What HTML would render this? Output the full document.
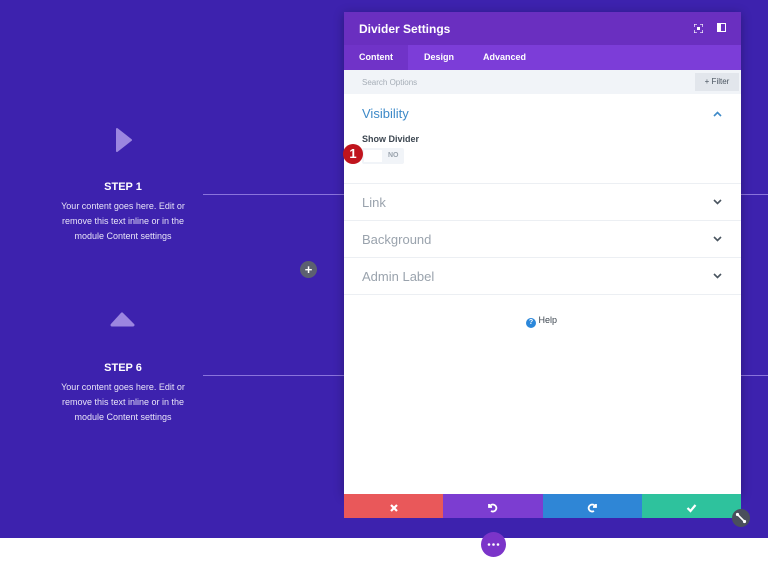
<!DOCTYPE html><html><head><style>
*{margin:0;padding:0;box-sizing:border-box}
body{width:768px;height:561px;overflow:hidden;background:#fff;font-family:"Liberation Sans",sans-serif;position:relative}
.bg{position:absolute;left:0;top:0;width:768px;height:538px;background:#3d22ae}
.a{position:absolute}
.step{color:#fff;font-weight:bold;font-size:11px;text-align:center;width:160px}
.txt{color:#e8e4f8;font-size:9px;line-height:15px;text-align:center;width:136px}
.line{height:1px;background:#8a74dc}
.row{position:absolute;left:344px;width:397px;height:37px;border-top:1px solid #eceff3;color:#9aa3ad;font-size:13px;padding:11px 18px}
.chev{position:absolute;right:19px;top:15px}
.btn{position:absolute;top:494px;height:24px;width:99.25px;text-align:center;padding-top:6px}
</style></head><body>
<div class="bg"></div>
<svg class="a" style="left:116px;top:127px" width="17" height="26"><path d="M1 2 L15 13 L1 24Z" fill="#9c86e0" stroke="#9c86e0" stroke-linejoin="round" stroke-width="2"/></svg>
<div class="a step" style="left:43px;top:181px">STEP 1</div>
<div class="a txt" style="left:55px;top:199px">Your content goes here. Edit or remove this text inline or in the module Content settings</div>
<div class="a line" style="left:203px;top:194px;width:565px"></div>
<div class="a" style="left:300px;top:261px;width:17px;height:17px;border-radius:50%;background:#5c6070;color:#fff;font-size:13px;line-height:17px;text-align:center;font-weight:bold">+</div>
<svg class="a" style="left:109px;top:310px" width="27" height="17"><path d="M3 15 L13 4 L24 15Z" fill="#9c86e0" stroke="#9c86e0" stroke-linejoin="round" stroke-width="3"/></svg>
<div class="a step" style="left:43px;top:362px">STEP 6</div>
<div class="a txt" style="left:55px;top:380px">Your content goes here. Edit or remove this text inline or in the module Content settings</div>
<div class="a line" style="left:203px;top:375px;width:565px"></div>

<div class="a" style="left:344px;top:12px;width:397px;height:482px;background:#fff;box-shadow:0 2px 10px rgba(0,0,0,.3)"></div>
<div class="a" style="left:344px;top:12px;width:397px;height:33px;background:#6a2fc0;color:#fff;font-weight:bold;font-size:12px;padding:10px 15px">Divider Settings
<svg style="position:absolute;right:38px;top:12px" width="9" height="9"><path d="M0 3V0H3M6 0H9V3M9 6V9H6M3 9H0V6" stroke="#fff" fill="none" stroke-width="1.3"/><rect x="3" y="3" width="3" height="3" fill="#fff"/></svg>
<span style="position:absolute;right:15px;top:11px;width:9px;height:9px;border:1.5px solid #fff;border-left-width:4px"></span></div>
<div class="a" style="left:344px;top:45px;width:397px;height:25px;background:#7c3dd8;color:#fff;font-size:9px;font-weight:bold">
<span class="a" style="left:0;width:64px;height:25px;background:#7033c8;line-height:25px;text-align:center">Content</span>
<span class="a" style="left:80px;line-height:25px">Design</span>
<span class="a" style="left:139px;line-height:25px">Advanced</span></div>
<div class="a" style="left:344px;top:70px;width:397px;height:24px;background:#f1f4f8;color:#a5adb6;font-size:8px;padding:8px 18px">Search Options
<span style="position:absolute;right:2px;top:3px;width:44px;height:18px;background:#e2e6ec;color:#4a5560;font-size:8px;line-height:18px;text-align:center">+ Filter</span></div>
<div class="a" style="left:362px;top:106px;color:#3e8ac8;font-size:13px">Visibility</div>
<svg class="a" style="left:713px;top:111px" width="9" height="6"><path d="M1 5L4.5 1.5L8 5" stroke="#3e8ac8" stroke-width="1.6" fill="none"/></svg>
<div class="a" style="left:362px;top:134px;color:#3c4650;font-size:9px;font-weight:bold">Show Divider</div>
<div class="a" style="left:362px;top:148px;width:42px;height:16px;background:#f1f4f8;border-radius:2px"><span class="a" style="left:2px;top:2px;width:18px;height:12px;background:#fff"></span><span class="a" style="left:26px;top:4px;font-size:7px;color:#9aa3ad;font-weight:bold">NO</span></div>
<div class="a" style="left:343px;top:144px;width:20px;height:20px;border-radius:50%;background:#c0141d;color:#fff;font-weight:bold;font-size:13px;line-height:20px;text-align:center">1</div>
<div class="row" style="top:183px">Link<svg class="chev" width="9" height="6"><path d="M1 1L4.5 4.5L8 1" stroke="#4a5560" stroke-width="1.6" fill="none"/></svg></div>
<div class="row" style="top:220px">Background<svg class="chev" width="9" height="6"><path d="M1 1L4.5 4.5L8 1" stroke="#4a5560" stroke-width="1.6" fill="none"/></svg></div>
<div class="row" style="top:257px">Admin Label<svg class="chev" width="9" height="6"><path d="M1 1L4.5 4.5L8 1" stroke="#4a5560" stroke-width="1.6" fill="none"/></svg></div>
<div class="row" style="top:294px;height:1px;padding:0"></div>
<div class="a" style="left:526px;top:315px;font-size:9px;color:#3c4650"><span style="display:inline-block;width:10px;height:10px;border-radius:50%;background:#2b87da;color:#fff;font-size:7px;text-align:center;line-height:10px;font-weight:bold;vertical-align:-1px">?</span> Help</div>
<div class="btn" style="left:344px;background:#e9585a"><svg width="10" height="10"><path d="M2 2L8 8M8 2L2 8" stroke="#fff" stroke-width="2.2"/></svg></div>
<div class="btn" style="left:443.25px;background:#7c3dd1"><svg width="11" height="11"><path d="M2 2V5H5M2.5 5A3.5 3.5 0 1 1 4 9" stroke="#fff" stroke-width="1.8" fill="none"/></svg></div>
<div class="btn" style="left:542.5px;background:#2f86d6"><svg width="11" height="11"><path d="M9 2V5H6M8.5 5A3.5 3.5 0 1 0 7 9" stroke="#fff" stroke-width="1.8" fill="none"/></svg></div>
<div class="btn" style="left:641.75px;background:#2ec29d"><svg width="11" height="10"><path d="M1.5 5L4.5 8L9.5 2" stroke="#fff" stroke-width="2.2" fill="none"/></svg></div>
<div class="a" style="left:732px;top:509px;width:18px;height:18px;border-radius:50%;background:#4a4f5c"><svg width="18" height="18"><path d="M5.5 5.5L12.5 12.5" stroke="#fff" stroke-width="1.6"/><circle cx="5.5" cy="5.5" r="1.6" fill="#fff"/><circle cx="12.5" cy="12.5" r="1.6" fill="#fff"/></svg></div>
<div class="a" style="left:481px;top:532px;width:25px;height:25px;border-radius:50%;background:#7b34c9"><svg width="25" height="25"><circle cx="8" cy="12.5" r="1.3" fill="#fff"/><circle cx="12.5" cy="12.5" r="1.3" fill="#fff"/><circle cx="17" cy="12.5" r="1.3" fill="#fff"/></svg></div>
</body></html>
